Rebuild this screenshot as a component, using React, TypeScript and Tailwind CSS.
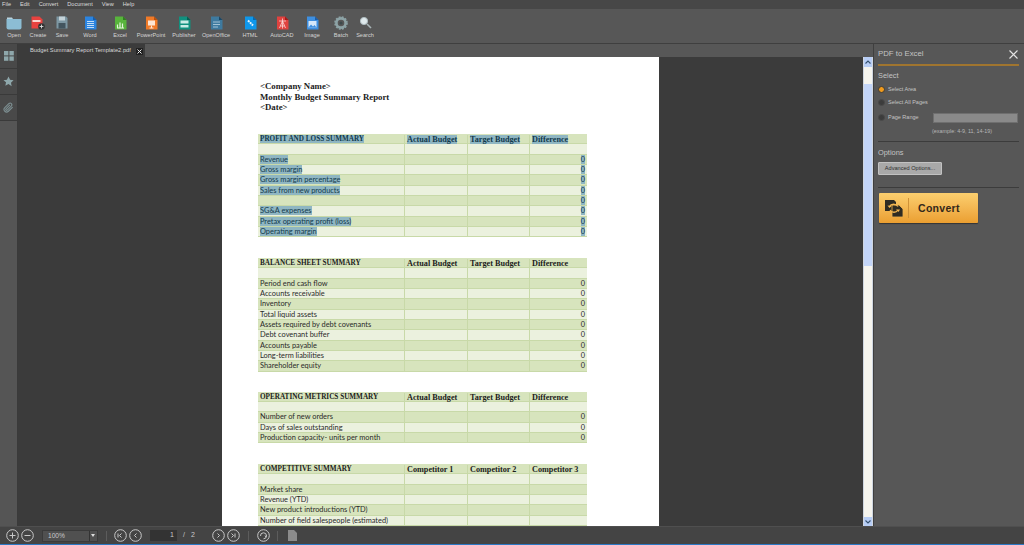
import React from "react";

const sans = "font-['Liberation_Sans',Arial,sans-serif]";

function FileIcon({ color, fold, children }: { color: string; fold: string; children?: React.ReactNode }) {
  return (
    <svg width="13" height="14" viewBox="0 0 13 14">
      <path d="M1 0.5h8l3.5 3.5v9.5h-11.5z" fill={color} />
      <path d="M9 0.5l3.5 3.5h-3.5z" fill={fold} />
      {children}
    </svg>
  );
}

const tools: { label: string; w: string; icon: React.ReactNode }[] = [
  {
    label: "Open",
    w: "w-[24px]",
    icon: (
      <svg width="16" height="14" viewBox="0 0 16 14">
        <path d="M1 3l0-1.5h5l1 1.5z" fill="#b9d3df" />
        <path d="M0.5 3h15v8.5a2 2 0 0 1-2 2h-11a2 2 0 0 1-2-2z" fill="#8cbdd4" />
      </svg>
    ),
  },
  {
    label: "Create",
    w: "w-[24px]",
    icon: (
      <svg width="14" height="14" viewBox="0 0 14 14">
        <path d="M0.5 0.5h8l3 3v9h-11z" fill="#e8423f" />
        <rect x="1.5" y="4" width="8" height="2" fill="#fbd5d0" />
        <circle cx="10.5" cy="10.5" r="3.3" fill="#333" />
        <path d="M10.5 8.6v3.8M8.6 10.5h3.8" stroke="#ddd" strokeWidth="0.9" />
      </svg>
    ),
  },
  {
    label: "Save",
    w: "w-[24px]",
    icon: (
      <svg width="12" height="13" viewBox="0 0 12 13">
        <path d="M0.5 0.5h9.5l1.5 1.5v10.5h-11z" fill="#7d97a3" />
        <rect x="3" y="0.5" width="6" height="4" fill="#c4d2d8" />
        <rect x="2.5" y="7" width="7" height="5.5" fill="#43555f" />
      </svg>
    ),
  },
  {
    label: "Word",
    w: "w-[32px]",
    icon: (
      <FileIcon color="#2b84e0" fold="#155ca8">
        <path d="M3 5.5h7M3 7.5h7M3 9.5h7M3 11.5h7" stroke="#d3e8fb" strokeWidth="0.9" />
      </FileIcon>
    ),
  },
  {
    label: "Excel",
    w: "w-[28px]",
    icon: (
      <FileIcon color="#58b43c" fold="#2f7d1f">
        <path d="M3.5 11.5v-3M6 11.5v-5M8.5 11.5v-4M3 12h7" stroke="#e4f5dc" strokeWidth="1.2" />
      </FileIcon>
    ),
  },
  {
    label: "PowerPoint",
    w: "w-[34px]",
    icon: (
      <FileIcon color="#f07a28" fold="#b84f0c">
        <rect x="3" y="4.5" width="7" height="5" fill="#fde6d4" />
        <path d="M6.5 9.5v2.5M4.5 12h4" stroke="#fde6d4" />
      </FileIcon>
    ),
  },
  {
    label: "Publisher",
    w: "w-[32px]",
    icon: (
      <FileIcon color="#11917f" fold="#075e52">
        <rect x="2.5" y="4.5" width="8" height="3" fill="#c9ece6" />
        <rect x="2.5" y="9" width="8" height="2.5" fill="#c9ece6" />
      </FileIcon>
    ),
  },
  {
    label: "OpenOffice",
    w: "w-[32px]",
    icon: (
      <FileIcon color="#3e7a9f" fold="#1c4663">
        <path d="M3 6h7M3 8.5h7M3 11h5" stroke="#bcd4e2" strokeWidth="0.8" />
      </FileIcon>
    ),
  },
  {
    label: "HTML",
    w: "w-[36px]",
    icon: (
      <FileIcon color="#0f97ea" fold="#0767ab">
        <path d="M4 4.5l5 5" stroke="#e2f3fd" strokeWidth="2" strokeDasharray="2 0.7" />
      </FileIcon>
    ),
  },
  {
    label: "AutoCAD",
    w: "w-[28px]",
    icon: (
      <FileIcon color="#e0423f" fold="#a11a1a">
        <path d="M3 5h7M6.5 2.5v10M3.5 12l3-7 3 7M4.5 10h4" stroke="#fbd9d8" strokeWidth="0.8" fill="none" />
      </FileIcon>
    ),
  },
  {
    label: "Image",
    w: "w-[32px]",
    icon: (
      <FileIcon color="#3e8fe0" fold="#1d5da5">
        <rect x="2.5" y="5" width="8" height="6.5" fill="#d6e8fa" />
        <path d="M2.5 11.5l2.5-3 2 2 1.5-1.5 2 2.5z" fill="#3e8fe0" />
      </FileIcon>
    ),
  },
  {
    label: "Batch",
    w: "w-[26px]",
    icon: (
      <svg width="14" height="14" viewBox="0 0 14 14">
        <circle cx="7" cy="7" r="4.6" fill="none" stroke="#8da3a6" strokeWidth="2.6" />
        <circle cx="7" cy="7" r="6" fill="none" stroke="#8da3a6" strokeWidth="1.6" strokeDasharray="1.9 1.25" />
        <circle cx="7" cy="7" r="1.6" fill="#3d4a4c" />
      </svg>
    ),
  },
  {
    label: "Search",
    w: "w-[22px]",
    icon: (
      <svg width="13" height="13" viewBox="0 0 13 13">
        <circle cx="5" cy="5" r="3.6" fill="#dfe9ec" stroke="#aebcc0" />
        <path d="M8 8l4 4" stroke="#a8b4b6" strokeWidth="1.6" />
      </svg>
    ),
  },
];

function Sel({ on, children }: { on: boolean; children: React.ReactNode }) {
  return on ? <span className="bg-[#8fb6c2] text-[#123a4c]">{children}</span> : <>{children}</>;
}

function Row({ cells, dark, head, sel }: { cells: string[]; dark: boolean; head?: boolean; sel?: boolean }) {
  const bg = dark ? "bg-[#d7e4bd]" : "bg-[#ebf1de]";
  const txt = head
    ? "font-['Liberation_Serif',serif] font-bold text-[8.2px] text-[#1c1c1c] pt-[1px]"
    : "font-['Lato',sans-serif] text-[7.4px] text-[#2a2a2a]";
  return (
    <div className={`flex h-[10.35px] items-baseline leading-[9px] ${bg} ${txt} border-b border-[#c8d9a8]`}>
      <div className={`w-[147px] self-stretch pl-[2px] whitespace-nowrap border-r border-[#c8d9a8] ${head ? "text-[7.2px]" : ""}`}>
        {cells[0] ? <Sel on={!!sel}>{cells[0]}</Sel> : null}
      </div>
      <div className="w-[63px] self-stretch pl-[2px] whitespace-nowrap border-r border-[#c8d9a8]">
        {cells[1] ? <Sel on={!!sel}>{cells[1]}</Sel> : null}
      </div>
      <div className="w-[62px] self-stretch pl-[2px] whitespace-nowrap border-r border-[#c8d9a8]">
        {cells[2] ? <Sel on={!!sel}>{cells[2]}</Sel> : null}
      </div>
      <div className={`flex-1 self-stretch pl-[2px] whitespace-nowrap ${cells[3] === "0" ? "text-right pr-[2px]" : ""}`}>
        {cells[3] ? <Sel on={!!sel}>{cells[3]}</Sel> : null}
      </div>
    </div>
  );
}

function Table({ head, rows, sel, cols, zero = true, mt }: { head: string; rows: string[]; sel?: boolean; cols: string[]; zero?: boolean; mt: string }) {
  return (
    <div className={`w-[329px] ml-[36px] ${mt}`}>
      <Row cells={[head, ...cols]} dark head sel={sel} />
      <Row cells={["", "", "", ""]} dark={false} />
      {rows.map((r, i) => (
        <Row key={i} cells={[r, "", "", zero ? "0" : ""]} dark={i % 2 === 0} sel={sel} />
      ))}
    </div>
  );
}

function Round({ children, size = 13 }: { children?: React.ReactNode; size?: number }) {
  return (
    <svg width={size} height={size} viewBox="0 0 13 13" fill="none" stroke="#c9c9c9" strokeWidth="1">
      <circle cx="6.5" cy="6.5" r="5.8" />
      {children}
    </svg>
  );
}

function Radio({ on }: { on?: boolean }) {
  return (
    <span className={`w-[7px] h-[7px] rounded-full block ${on ? "bg-[#f09a1c] border border-[#3a3a3a]" : "bg-[#3c3c3c] border border-[#4a4a4a]"}`} />
  );
}

export default function App() {
  const bud = ["Actual Budget", "Target Budget", "Difference"];
  return (
    <div className={`w-[1024px] h-[545px] overflow-hidden flex flex-col bg-[#3b3b3b] ${sans}`}>
      {/* menu */}
      <div className="h-[9px] bg-[#474747] flex items-center pl-[2px] gap-[9px] text-[5.6px] leading-none text-[#dcdcdc]">
        {["File", "Edit", "Convert", "Document", "View", "Help"].map((m) => (
          <span key={m}>{m}</span>
        ))}
      </div>
      {/* toolbar */}
      <div className="h-[35px] bg-[#575757] border-b border-[#3f3f3f] flex pl-[2px]">
        {tools.map((t) => (
          <div key={t.label} className={`${t.w} flex flex-col items-center pt-[6px]`}>
            <div className="h-[15px] flex items-center justify-center">{t.icon}</div>
            <span className="mt-[2px] text-[5.6px] leading-[7px] text-[#d4d4d4] whitespace-nowrap">{t.label}</span>
          </div>
        ))}
      </div>
      {/* body */}
      <div className="h-[482px] flex">
        {/* rail */}
        <div className="w-[18px] flex flex-col bg-[#555555] border-r border-[#3a3a3a]">
          <div className="h-[25px] bg-[#494949] flex items-center justify-center border-b border-[#3a3a3a]">
            <svg width="10" height="10" viewBox="0 0 10 10" fill="#8ea7ab"><rect width="4.4" height="4.4" /><rect x="5.4" width="4.4" height="4.4" /><rect y="5.4" width="4.4" height="4.4" /><rect x="5.4" y="5.4" width="4.4" height="4.4" /></svg>
          </div>
          <div className="h-[26px] bg-[#494949] flex items-center justify-center border-b border-[#3a3a3a]">
            <svg width="11" height="11" viewBox="0 0 24 24" fill="#8ea7ab"><path d="M12 1l3.4 7.2 7.6 1-5.6 5.400 1.500 7.900L12 17.700l-6.900 3.800 1.500-7.900L1 9.200l7.600-1z" /></svg>
          </div>
          <div className="h-[26px] bg-[#494949] flex items-center justify-center border-b border-[#3a3a3a]">
            <svg width="11" height="11" viewBox="0 0 24 24" fill="none" stroke="#7d8f92" strokeWidth="2.4"><path d="M21 11l-9.200 9.200a5.500 5.500 0 0 1-7.800-7.800L13.200 3.200a3.700 3.700 0 0 1 5.200 5.200l-9.200 9.200a1.800 1.800 0 0 1-2.600-2.600l8.500-8.500" /></svg>
          </div>
        </div>
        {/* centre */}
        <div className="w-[855px] flex flex-col">
          <div className="h-[13px] bg-[#575757] flex">
            <div className="h-full w-[127px] bg-[#3b3b3b] flex items-center pl-[12px] gap-[5px] pt-[1px]">
              <span className="text-[5.75px] leading-none text-[#d8d8d8] whitespace-nowrap">Budget Summary Report Template2.pdf</span>
              <span className="w-[7px] h-[7px] bg-[#222] flex items-center justify-center">
                <svg width="5" height="5" viewBox="0 0 5 5" stroke="#eee" strokeWidth="1"><path d="M0.5 0.5l4 4M4.5 0.5l-4 4" /></svg>
              </span>
            </div>
          </div>
          <div className="flex-1 min-h-0 flex">
            <div className="w-[204px]" />
            {/* page */}
            <div className="w-[437px] h-full bg-white overflow-hidden">
              <div className="pt-[24px] pl-[38px] font-['Liberation_Serif',serif] font-bold text-[8.8px] leading-[10.5px] text-[#1c1c1c]">
                <div>&lt;Company Name&gt;</div>
                <div>Monthly Budget Summary Report</div>
                <div>&lt;Date&gt;</div>
              </div>
              <Table
                mt="mt-[21.5px]"
                head="PROFIT AND LOSS SUMMARY"
                cols={bud}
                sel
                rows={["Revenue", "Gross margin", "Gross margin percentage", "Sales from new products", "", "SG&A expenses", "Pretax operating profit (loss)", "Operating margin"]}
              />
              <Table
                mt="mt-[20.5px]"
                head="BALANCE SHEET SUMMARY"
                cols={bud}
                rows={["Period end cash flow", "Accounts receivable", "Inventory", "Total liquid assets", "Assets required by debt covenants", "Debt covenant buffer", "Accounts payable", "Long-term liabilities", "Shareholder equity"]}
              />
              <Table
                mt="mt-[20px]"
                head="OPERATING METRICS SUMMARY"
                cols={bud}
                rows={["Number of new orders", "Days of sales outstanding", "Production capacity- units per month"]}
              />
              <Table
                mt="mt-[20.5px]"
                head="COMPETITIVE SUMMARY"
                cols={["Competitor 1", "Competitor 2", "Competitor 3"]}
                zero={false}
                rows={["Market share", "Revenue (YTD)", "New product introductions (YTD)", "Number of field salespeople (estimated)"]}
              />
            </div>
            <div className="w-[204px]" />
            {/* scrollbar */}
            <div className="w-[10px] h-full bg-[#f5f4ee] flex flex-col border-x border-[#cfd6e0]">
              <div className="h-[10px] bg-[#b7cdf5] flex items-center justify-center">
                <svg width="6" height="4" viewBox="0 0 6 4" fill="none" stroke="#34506e" strokeWidth="1.1"><path d="M0.5 3.5L3 1l2.5 2.5" /></svg>
              </div>
              <div className="h-[17px]" />
              <div className="h-[182px] bg-[#c3d5f8]" />
              <div className="flex-1" />
              <div className="h-[9px] bg-[#b7cdf5] flex items-center justify-center">
                <svg width="6" height="4" viewBox="0 0 6 4" fill="none" stroke="#34506e" strokeWidth="1.1"><path d="M0.5 0.5L3 3l2.500-2.500" /></svg>
              </div>
            </div>
          </div>
        </div>
        {/* panel */}
        <div className="flex-1 bg-[#575757] border-l border-[#3f3f3f] pl-[4px] pr-[5px] text-[#c4c4c4]">
          <div className="h-[22px] flex items-center justify-between border-b-2 border-[#a0752f]">
            <span className="text-[7.8px] leading-none">PDF to Excel</span>
            <svg width="9" height="9" viewBox="0 0 9 9" stroke="#e4e4e4" strokeWidth="1.1" className="mr-[1px]"><path d="M0.5 0.5l8 8M8.5 0.5l-8 8" /></svg>
          </div>
          <div className="mt-[5px] text-[7.4px] leading-[9px]">Select</div>
          <div className="mt-[5px] h-[9px] flex items-center gap-[3px] text-[5.5px]"><Radio on />Select Area</div>
          <div className="mt-[4px] h-[9px] flex items-center gap-[3px] text-[5.5px]"><Radio />Select All Pages</div>
          <div className="mt-[5px] h-[11px] flex items-center text-[5.5px]">
            <span className="flex items-center gap-[3px] w-[55px]"><Radio />Page Range</span>
            <span className="w-[85px] h-[10px] bg-[#8a8a8a] border border-[#6f6f6f]" />
          </div>
          <div className="mt-[4px] pl-[54px] text-[5.4px] leading-[8px] text-[#b8b8b8]">(example: 4-9, 11, 14-19)</div>
          <div className="mt-[6px] border-t border-[#3c3c3c]" />
          <div className="mt-[6px] text-[7.4px] leading-[9px]">Options</div>
          <div className="mt-[5px] w-[64px] h-[13px] bg-[#a9a9a9] border border-[#c2c2c2] rounded-[1px] flex items-center justify-center text-[5.6px] text-[#2c2c2c]">Advanced Options...</div>
          <div className="mt-[12px] border-t border-[#3c3c3c]" />
          <div className="mt-[5px] ml-[1px] w-[99px] h-[30px] rounded-[1px] bg-gradient-to-b from-[#fbcf6e] to-[#eb9f30] flex items-center shadow-[0_1px_1px_rgba(0,0,0,0.4)]">
            <div className="w-[24px] h-[20px] flex items-center border-r border-[#cf9238] ml-[6px]">
              <svg width="18" height="17" viewBox="0 0 18 17">
                <path d="M0 0h9l2 2v9H0z" fill="#2f2b22" />
                <path d="M7 5h7l4 4v8H7z" fill="#2f2b22" stroke="#f3b650" strokeWidth="0.8" />
                <path d="M13 6.500C11 3.500 6 3.500 4.500 6.500" fill="none" stroke="#f3b650" strokeWidth="1.300" />
                <path d="M2.500 5.500l2 2.500 2-2z" fill="#f3b650" />
                <path d="M5 10c2 3 6 3 8 0" fill="none" stroke="#f3b650" strokeWidth="1.300" />
                <path d="M11 9.500h4l-1.500 2.500z" fill="#f3b650" />
              </svg>
            </div>
            <span className="ml-[9px] mt-[2px] text-[10.5px] font-bold text-[#33281a] tracking-[0.3px]">Convert</span>
          </div>
        </div>
      </div>
      {/* bottom bar */}
      <div className="h-[18px] bg-[#444444] flex items-center text-[#c9c9c9] border-t border-[#4f4f4f]">
        <div className="flex items-center gap-[2px] ml-[6px]">
          <Round><path d="M3.500 6.500h6M6.500 3.500v6" /></Round>
          <Round><path d="M3.500 6.500h6" /></Round>
        </div>
        <div className="ml-[8px] w-[56px] h-[12px] bg-[#505050] flex items-center justify-between text-[6.6px] pl-[5px] pr-[1px] border border-[#3a3a3a]">
          <span>100%</span>
          <span className="w-[7px] h-full flex items-center justify-center border-l border-[#333]">
            <svg width="4" height="3" viewBox="0 0 4 3" fill="#ddd"><path d="M0 0h4L2 3z" /></svg>
          </span>
        </div>
        <div className="ml-[8px] h-[10px] border-l border-[#5c5c5c]" />
        <div className="flex items-center gap-[2px] ml-[7px]">
          <Round><path d="M7.500 4.500L5.500 6.500l2 2M4 4.500v4" /></Round>
          <Round><path d="M7.500 4.500L5.500 6.500l2 2" /></Round>
        </div>
        <div className="ml-[8px] w-[27px] h-[11px] bg-[#333333] flex items-center justify-end pr-[3px] text-[7px]">1</div>
        <span className="ml-[6px] w-[14px] text-[7px] tracking-[2px] whitespace-pre">/ 2</span>
        <div className="flex items-center gap-[2px] ml-[15px]">
          <Round><path d="M5.500 4.500l2 2-2 2" /></Round>
          <Round><path d="M4.500 4.500l2 2-2 2M8 4.500v4" /></Round>
        </div>
        <div className="ml-[8px] h-[10px] border-l border-[#5c5c5c]" />
        <div className="ml-[8px]">
          <svg width="13" height="13" viewBox="0 0 13 13" fill="none" stroke="#c9c9c9"><circle cx="6.500" cy="6.500" r="5.800" /><path d="M3.500 7a3 3 0 1 1 3 2.800M9.500 6.200l-.5 1.400-1.200-.8" /></svg>
        </div>
        <div className="ml-[7px] h-[10px] border-l border-[#5c5c5c]" />
        <div className="ml-[10px]">
          <svg width="9" height="11" viewBox="0 0 9 11" fill="#8c8c8c"><path d="M0 0h6l3 3v8H0z" /></svg>
        </div>
      </div>
      <div className="h-[1px] bg-[#2b78c5]" />
    </div>
  );
}
